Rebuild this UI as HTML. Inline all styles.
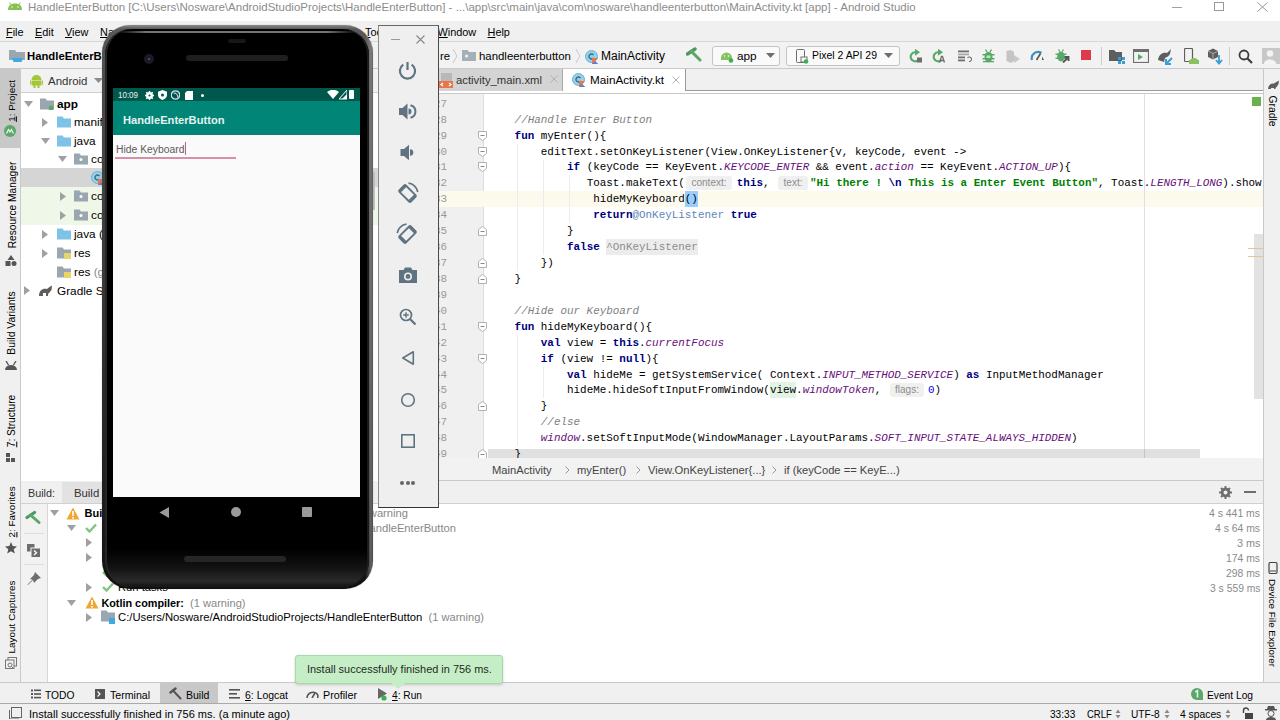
<!DOCTYPE html><html><head><meta charset="utf-8"><style>
html,body{margin:0;padding:0;width:1280px;height:720px;overflow:hidden;background:#f2f2f2;position:relative;font-family:"Liberation Sans",sans-serif;}
div{box-sizing:border-box;}
.k{color:#000080;font-weight:bold}.c{color:#808080;font-style:italic}.s{color:#008000;font-weight:bold}.p{color:#660e7a;font-style:italic}.lb{color:#5b86b8}
</style></head><body>
<div style="position:absolute;left:0px;top:0px;width:1280px;height:21px;background:#fff"></div>
<svg style="position:absolute;left:7px;top:2px" width="16" height="9" viewBox="0 0 16 9"><path d="M1 8 C1 3.5 4 1.5 8 1.5 C12 1.5 15 3.5 15 8 Z" fill="#86bf55"/><line x1="2.5" y1="0.5" x2="4" y2="2.5" stroke="#86bf55" stroke-width="1"/><line x1="13.5" y1="0.5" x2="12" y2="2.5" stroke="#86bf55" stroke-width="1"/><circle cx="5" cy="5" r="0.9" fill="#c8f0a0"/><circle cx="11" cy="5" r="0.9" fill="#c8f0a0"/></svg>
<div style="position:absolute;left:28px;top:-0.60px;height:16px;line-height:16px;font-family:'Liberation Sans', sans-serif;font-size:11.50px;color:#8c8c8c;font-weight:400;white-space:pre;">HandleEnterButton [C:\Users\Nosware\AndroidStudioProjects\HandleEnterButton] - ...\app\src\main\java\com\nosware\handleenterbutton\MainActivity.kt [app] - Android Studio</div>
<div style="position:absolute;left:1172px;top:7px;width:10px;height:1px;background:#a0a0a0"></div>
<div style="position:absolute;left:1214px;top:2px;width:10px;height:9px;border:1px solid #999"></div>
<svg style="position:absolute;left:1257px;top:2px" width="11" height="10"><path d="M0.5 0.5 L10.5 9.5 M10.5 0.5 L0.5 9.5" stroke="#999" stroke-width="1"/></svg>
<div style="position:absolute;left:0px;top:21px;width:1280px;height:20px;background:#f0f0f0"></div>
<div style="position:absolute;left:0px;top:41px;width:1280px;height:1px;background:#d6d6d6"></div>
<div style="position:absolute;left:6px;top:23.50px;height:16px;line-height:16px;font-family:'Liberation Sans', sans-serif;font-size:10.9px;color:#000;font-weight:400;white-space:pre;text-decoration-color:#888;"><u>F</u>ile</div>
<div style="position:absolute;left:35px;top:23.50px;height:16px;line-height:16px;font-family:'Liberation Sans', sans-serif;font-size:10.9px;color:#000;font-weight:400;white-space:pre;text-decoration-color:#888;"><u>E</u>dit</div>
<div style="position:absolute;left:65px;top:23.50px;height:16px;line-height:16px;font-family:'Liberation Sans', sans-serif;font-size:10.9px;color:#000;font-weight:400;white-space:pre;text-decoration-color:#888;"><u>V</u>iew</div>
<div style="position:absolute;left:100px;top:23.50px;height:16px;line-height:16px;font-family:'Liberation Sans', sans-serif;font-size:10.9px;color:#000;font-weight:400;white-space:pre;text-decoration-color:#888;"><u>N</u>avigate</div>
<div style="position:absolute;left:365px;top:23.50px;height:16px;line-height:16px;font-family:'Liberation Sans', sans-serif;font-size:10.9px;color:#000;font-weight:400;white-space:pre;text-decoration-color:#888;"><u>T</u>ools</div>
<div style="position:absolute;left:437.5px;top:23.50px;height:16px;line-height:16px;font-family:'Liberation Sans', sans-serif;font-size:10.9px;color:#000;font-weight:400;white-space:pre;text-decoration-color:#888;"><u>W</u>indow</div>
<div style="position:absolute;left:487.5px;top:23.50px;height:16px;line-height:16px;font-family:'Liberation Sans', sans-serif;font-size:10.9px;color:#000;font-weight:400;white-space:pre;text-decoration-color:#888;"><u>H</u>elp</div>
<div style="position:absolute;left:0px;top:42px;width:1280px;height:26px;background:#f2f2f2"></div>
<div style="position:absolute;left:0px;top:68px;width:1280px;height:1px;background:#c9c9c9"></div>
<svg style="position:absolute;left:9px;top:49px" width="16" height="14"><path d="M0 1 h6 l1.5 2 h8.5 v8 h-16z" fill="#9aa7b0"/><path d="M3 9 h11 l-1.5 4 h-8z" fill="#40a9e0"/></svg>
<div style="position:absolute;left:27px;top:47.60px;height:16px;line-height:16px;font-family:'Liberation Sans', sans-serif;font-size:11.3px;color:#000;font-weight:bold;white-space:pre;">HandleEnterBu</div>
<div style="position:absolute;left:440px;top:48.00px;height:16px;line-height:16px;font-family:'Liberation Sans', sans-serif;font-size:11.4px;color:#000;font-weight:400;white-space:pre;">re</div>
<svg style="position:absolute;left:452px;top:48px" width="6" height="16"><path d="M1 1 L5 8 L1 15" stroke="#c8c8c8" fill="none"/></svg>
<svg style="position:absolute;left:462px;top:50px" width="14" height="11"><path d="M0 0 h5.5 l1.5 2 h7 v9 h-14z" fill="#a4afb6"/><circle cx="4.5" cy="6" r="1.6" fill="#eef"/></svg>
<div style="position:absolute;left:479px;top:48.00px;height:16px;line-height:16px;font-family:'Liberation Sans', sans-serif;font-size:11.41px;color:#000;font-weight:400;white-space:pre;">handleenterbutton</div>
<svg style="position:absolute;left:575px;top:48px" width="6" height="16"><path d="M1 1 L5 8 L1 15" stroke="#c8c8c8" fill="none"/></svg>
<svg style="position:absolute;left:585px;top:50px" width="14" height="14"><circle cx="6.5" cy="6.5" r="6" fill="#9ccfe6"/><circle cx="6.5" cy="6.5" r="6" fill="none" stroke="#5fb5d8" stroke-width="1"/><path d="M8.5 5 A2.5 2.5 0 1 0 8.5 8" stroke="#2d6f90" stroke-width="1.4" fill="none"/><path d="M7 14 L7 8 L13 8 L10 11 L13 14z" fill="#e8784a"/><path d="M7 14 L10 11 L13 14z" fill="#5a7bd8"/></svg>
<div style="position:absolute;left:601px;top:48.00px;height:16px;line-height:16px;font-family:'Liberation Sans', sans-serif;font-size:12px;color:#000;font-weight:400;white-space:pre;">MainActivity</div>
<svg style="position:absolute;left:686px;top:47px" width="16" height="16"><path d="M1.5 7 L9 2" stroke="#4e9a5e" stroke-width="3.4" stroke-linecap="round"/><path d="M5.5 4.5 L14 13" stroke="#59a869" stroke-width="3" stroke-linecap="round"/></svg>
<div style="position:absolute;left:712px;top:46px;width:68px;height:20px;background:#fafafa;border:1px solid #c4c4c4;border-radius:3px"></div>
<svg style="position:absolute;left:720px;top:50px" width="14" height="13"><path d="M1 8 A5.5 5.5 0 0 1 12 8 Z" fill="#8ac060"/><circle cx="4.5" cy="6" r="0.7" fill="#fff"/><circle cx="8.5" cy="6" r="0.7" fill="#fff"/><rect x="1" y="8" width="11" height="2" fill="#8ac060"/><circle cx="11" cy="10.5" r="2.3" fill="#3cb04a"/></svg>
<div style="position:absolute;left:737px;top:48.00px;height:16px;line-height:16px;font-family:'Liberation Sans', sans-serif;font-size:11.8px;color:#000;font-weight:400;white-space:pre;">app</div>
<svg style="position:absolute;left:766px;top:53px" width="9" height="6"><path d="M0 0 h9 l-4.5 5z" fill="#6e6e6e"/></svg>
<div style="position:absolute;left:786px;top:46px;width:114px;height:20px;background:#fafafa;border:1px solid #c4c4c4;border-radius:3px"></div>
<svg style="position:absolute;left:796px;top:49px" width="13" height="15"><rect x="0.5" y="0.5" width="8" height="13" rx="1" fill="none" stroke="#6e6e6e"/><rect x="5" y="8" width="6" height="5" fill="#fafafa" stroke="#6e6e6e"/><circle cx="10" cy="12.5" r="2.3" fill="#3cb04a"/></svg>
<div style="position:absolute;left:812px;top:48.00px;height:16px;line-height:16px;font-family:'Liberation Sans', sans-serif;font-size:10.44px;color:#000;font-weight:400;white-space:pre;">Pixel 2 API 29</div>
<svg style="position:absolute;left:884px;top:53px" width="9" height="6"><path d="M0 0 h9 l-4.5 5z" fill="#6e6e6e"/></svg>
<svg style="position:absolute;left:909px;top:49px" width="14" height="14" viewBox="0 0 14 14"><path d="M6.5 3.2 A4.6 4.6 0 1 0 9.6 11" stroke="#59a869" stroke-width="2.1" fill="none"/><path d="M6 -0.3 L11 3.2 L6 6.7z" fill="#59a869"/><rect x="8" y="8.5" width="5" height="5" fill="#6e6e6e"/></svg>
<svg style="position:absolute;left:932px;top:49px" width="14" height="14" viewBox="0 0 14 14"><path d="M6.5 3.2 A4.6 4.6 0 1 0 9.6 11" stroke="#59a869" stroke-width="2.1" fill="none"/><path d="M6 -0.3 L11 3.2 L6 6.7z" fill="#59a869"/><path d="M7.5 13.5 L9.5 7.5 H10.5 L12.5 13.5 M8.3 11.5 H11.7" stroke="#6e6e6e" stroke-width="1.3" fill="none"/></svg>
<svg style="position:absolute;left:958px;top:50px" width="14" height="12" viewBox="0 0 14 12"><rect x="0" y="0.5" width="11" height="1.8" fill="#6e6e6e"/><rect x="0" y="3.5" width="11" height="1.8" fill="#aaa"/><rect x="0" y="6.5" width="7" height="1.8" fill="#6e6e6e"/><rect x="0" y="9.5" width="7" height="1.8" fill="#6e6e6e"/><path d="M9.5 8 A2.2 2.2 0 1 1 11 11.5" stroke="#6e6e6e" stroke-width="1.1" fill="none"/></svg>
<svg style="position:absolute;left:982px;top:49px" width="13" height="14" viewBox="0 0 13 14"><ellipse cx="6.5" cy="8" rx="4" ry="5.3" fill="#59a869"/><rect x="0.5" y="5" width="12" height="1.5" fill="#59a869"/><rect x="0.5" y="9" width="12" height="1.5" fill="#59a869"/><rect x="1" y="12" width="11" height="1.3" fill="#59a869"/><path d="M3.5 0.5 L5 3 M9.5 0.5 L8 3" stroke="#59a869" stroke-width="1.4"/><rect x="4.5" y="6.5" width="4" height="2.5" fill="#b8e8b8"/></svg>
<svg style="position:absolute;left:1006px;top:50px" width="15" height="13" viewBox="0 0 15 13"><path d="M0.5 1 L5 0 L8 2 V11 L5 13 L0.5 11z" fill="#c4c4c4"/><path d="M8 5 L14 9 L8 13z" fill="#c8c8c8"/></svg>
<svg style="position:absolute;left:1030px;top:50px" width="15" height="11" viewBox="0 0 15 11"><path d="M2 10 A6.3 6.3 0 0 1 11.5 3" stroke="#3d8fc0" stroke-width="2.2" fill="none"/><path d="M6.5 10 L10.5 3.5" stroke="#555" stroke-width="1.6"/><path d="M12 6.5 L14 10 H12z" fill="#555"/></svg>
<svg style="position:absolute;left:1055px;top:49px" width="15" height="14" viewBox="0 0 15 14"><ellipse cx="6" cy="7.5" rx="3.8" ry="5" fill="#59a869"/><rect x="0.5" y="4.5" width="11" height="1.4" fill="#59a869"/><rect x="0.5" y="8.5" width="11" height="1.4" fill="#59a869"/><path d="M3.5 0.5 L4.8 2.5 M8.5 0.5 L7.2 2.5" stroke="#59a869" stroke-width="1.3"/><path d="M8 13.5 L13.5 8 M9.5 8 H13.5 V12" stroke="#555" stroke-width="1.9" fill="none"/></svg>
<svg style="position:absolute;left:1081px;top:50px" width="10" height="10" viewBox="0 0 10 10"><rect x="0" y="0" width="10" height="10" fill="#db3b4b"/></svg>
<div style="position:absolute;left:1101px;top:47px;width:1px;height:18px;background:#cdcdcd"></div>
<svg style="position:absolute;left:1109px;top:49px" width="16" height="16" viewBox="0 0 16 16"><path d="M0 1 h5 l2 2 h6 v9 h-13z" fill="#5e5e5e"/><rect x="9" y="8" width="3" height="3" fill="#389fd6"/><rect x="13" y="8" width="3" height="3" fill="#389fd6"/><rect x="9" y="12" width="3" height="3" fill="#389fd6"/><rect x="13" y="12" width="3" height="3" fill="#389fd6"/></svg>
<svg style="position:absolute;left:1133px;top:49px" width="16" height="14" viewBox="0 0 16 14"><rect x="0.5" y="0.5" width="15" height="13" fill="none" stroke="#6e6e6e" stroke-width="1.2"/><rect x="0" y="0" width="16" height="3" fill="#6e6e6e"/><path d="M5 5 L10 8 L5 11z" fill="#59a869"/></svg>
<svg style="position:absolute;left:1157px;top:48px" width="17" height="17" viewBox="0 0 17 17"><path d="M1 12 C2 6 6 4 10 5 C12 3 13 2 14 1 L13 6 C12 8 10 9 8 10 L7 14z" fill="#5e5e5e"/><path d="M9 16 L15 10 M9 11 v5 h5" stroke="#389fd6" stroke-width="2" fill="none"/></svg>
<svg style="position:absolute;left:1184px;top:48px" width="15" height="16" viewBox="0 0 15 16"><rect x="0.5" y="0.5" width="8" height="13" rx="1" fill="none" stroke="#5e5e5e" stroke-width="1.2"/><path d="M5 15 A5 5 0 0 1 15 15z" fill="#8ac060"/><rect x="5" y="12" width="10" height="4" fill="#8ac060"/></svg>
<svg style="position:absolute;left:1207px;top:48px" width="16" height="17" viewBox="0 0 16 17"><path d="M1 3 L6 0.5 L11 3 L11 9 L6 11.5 L1 9z" fill="#5e5e5e"/><path d="M1 3 L6 5.5 L11 3 M6 5.5 V11.5" stroke="#c0c0c0" stroke-width=".8" fill="none"/><path d="M12 7 V15 M9 12 L12 15.5 L15 12" stroke="#389fd6" stroke-width="1.8" fill="none"/></svg>
<div style="position:absolute;left:1229px;top:47px;width:1px;height:18px;background:#cdcdcd"></div>
<svg style="position:absolute;left:1238px;top:49px" width="15" height="15" viewBox="0 0 15 15"><circle cx="6" cy="6" r="4.5" stroke="#3c3c3c" stroke-width="1.8" fill="none"/><path d="M9.5 9.5 L14 14" stroke="#3c3c3c" stroke-width="2.2"/></svg>
<svg style="position:absolute;left:1262px;top:48px" width="18" height="16" viewBox="0 0 18 16"><rect x="0" y="0" width="18" height="16" fill="#c8c8c8"/><circle cx="8" cy="5.5" r="3.2" fill="#f4f4f4"/><path d="M2 16 C2 10 14 10 14 16z" fill="#f4f4f4"/></svg>
<div style="position:absolute;left:0px;top:69px;width:21px;height:614px;background:#f0f0f0"></div>
<div style="position:absolute;left:20px;top:69px;width:1px;height:614px;background:#c9c9c9"></div>
<div style="position:absolute;left:0px;top:69px;width:20px;height:79px;background:#c8c8c8"></div>
<div style="position:absolute;left:-8.9px;top:92.8px;width:41.7px;height:16px;line-height:16px;text-align:center;transform:rotate(-90deg);font-family:'Liberation Sans', sans-serif;font-size:9.9px;color:#000;white-space:pre"><u>1</u>: Project</div>
<svg style="position:absolute;left:4px;top:125px" width="12" height="12" viewBox="0 0 12 12"><circle cx="6" cy="6" r="6" fill="#59a869"/><path d="M2.5 8.5 L4.5 4.5 L6 7 L7.5 4.5 L9.5 8.5" stroke="#e8f4e8" stroke-width="1.3" fill="none"/></svg>
<div style="position:absolute;left:-31.5px;top:197.2px;width:87.0px;height:16px;line-height:16px;text-align:center;transform:rotate(-90deg);font-family:'Liberation Sans', sans-serif;font-size:10.2px;color:#000;white-space:pre">Resource Manager</div>
<svg style="position:absolute;left:5px;top:255px" width="12" height="11" viewBox="0 0 12 11"><path d="M6 0 L9.5 5 H2.5z" fill="#555"/><rect x="0.5" y="6" width="5" height="5" fill="#555"/><circle cx="9" cy="8.5" r="2.5" fill="#555"/></svg>
<div style="position:absolute;left:-19.7px;top:314.5px;width:63.39999999999998px;height:16px;line-height:16px;text-align:center;transform:rotate(-90deg);font-family:'Liberation Sans', sans-serif;font-size:10.4px;color:#000;white-space:pre">Build Variants</div>
<svg style="position:absolute;left:5px;top:361px" width="12" height="9" viewBox="0 0 12 9"><path d="M0 9 A6 5 0 0 1 12 9z" fill="#555"/><path d="M1 0 L3.5 4 M11 0 L8.5 4" stroke="#555" stroke-width="1.4"/></svg>
<div style="position:absolute;left:-14.2px;top:413.2px;width:52.5px;height:16px;line-height:16px;text-align:center;transform:rotate(-90deg);font-family:'Liberation Sans', sans-serif;font-size:10.16px;color:#000;white-space:pre"><u>7</u>: Structure</div>
<svg style="position:absolute;left:6px;top:453px" width="10" height="9" viewBox="0 0 10 9"><rect x="0" y="0" width="4" height="4" fill="#555"/><rect x="0" y="5" width="4" height="4" fill="#555"/><rect x="5" y="5" width="4" height="4" fill="#555"/></svg>
<div style="position:absolute;left:-13.4px;top:504.1px;width:50.80000000000001px;height:16px;line-height:16px;text-align:center;transform:rotate(-90deg);font-family:'Liberation Sans', sans-serif;font-size:9.76px;color:#000;white-space:pre"><u>2</u>: Favorites</div>
<svg style="position:absolute;left:5px;top:542px" width="12" height="12" viewBox="0 0 12 12"><path d="M6 0 L7.7 4.1 L12 4.4 L8.7 7.3 L9.8 11.6 L6 9.2 L2.2 11.6 L3.3 7.3 L0 4.4 L4.3 4.1z" fill="#555"/></svg>
<div style="position:absolute;left:-24.6px;top:609.4px;width:73.20000000000005px;height:16px;line-height:16px;text-align:center;transform:rotate(-90deg);font-family:'Liberation Sans', sans-serif;font-size:9.95px;color:#000;white-space:pre">Layout Captures</div>
<svg style="position:absolute;left:5px;top:657px" width="12" height="12" viewBox="0 0 12 12"><rect x="3" y="0.5" width="8.5" height="8.5" fill="none" stroke="#777"/><rect x="0.5" y="3" width="8.5" height="8.5" fill="#f0f0f0" stroke="#777"/><circle cx="5" cy="8" r="2" fill="none" stroke="#777"/><path d="M6.5 9.5 L8.5 11.5" stroke="#777"/></svg>
<div style="position:absolute;left:21px;top:69px;width:418px;height:24px;background:#f2f2f2"></div>
<div style="position:absolute;left:21px;top:92px;width:418px;height:1px;background:#d0d0d0"></div>
<svg style="position:absolute;left:30px;top:73px" width="13" height="16" viewBox="0 0 13 16"><path d="M1.5 7 A5 5 0 0 1 11.5 7z" fill="#a4c639"/><rect x="1.5" y="7.5" width="10" height="5" fill="#a4c639"/><rect x="0" y="7.5" width="1" height="4" fill="#a4c639"/><rect x="12" y="7.5" width="1" height="4" fill="#a4c639"/><rect x="3.5" y="12" width="2" height="3" fill="#a4c639"/><rect x="7.5" y="12" width="2" height="3" fill="#a4c639"/></svg>
<div style="position:absolute;left:48px;top:72.50px;height:16px;line-height:16px;font-family:'Liberation Sans', sans-serif;font-size:11.46px;color:#333;font-weight:400;white-space:pre;">Android</div>
<svg style="position:absolute;left:94px;top:78px" width="9" height="6" viewBox="0 0 9 6"><path d="M0 0 h9 l-4.5 5z" fill="#8c8c8c"/></svg>
<div style="position:absolute;left:93px;top:93px;width:346px;height:590px;background:#fff"></div>
<div style="position:absolute;left:21px;top:93px;width:418px;height:590px;background:#fff"></div>
<div style="position:absolute;left:21px;top:168px;width:418px;height:19px;background:#d5d5d5"></div>
<div style="position:absolute;left:21px;top:187px;width:418px;height:38px;background:#eff7e9"></div>
<svg style="position:absolute;left:24px;top:100.5px" width="9" height="7" viewBox="0 0 9 7"><path d="M0 0 h9 l-4.5 6z" fill="#a0a0a0"/></svg>
<svg style="position:absolute;left:40px;top:97.5px" width="14" height="12" viewBox="0 0 14 12"><path d="M0 0.5 h5.5 l1.5 2 h7 v9 h-14z" fill="#9aa7b0"/><circle cx="11" cy="10" r="2.5" fill="#59a869"/></svg>
<div style="position:absolute;left:57px;top:95.50px;height:16px;line-height:16px;font-family:'Liberation Sans', sans-serif;font-size:11.8px;color:#000;font-weight:bold;white-space:pre;">app</div>
<svg style="position:absolute;left:42px;top:117.5px" width="7" height="9" viewBox="0 0 7 9"><path d="M0 0 v9 l6 -4.5z" fill="#a0a0a0"/></svg>
<svg style="position:absolute;left:57px;top:116px" width="14" height="12" viewBox="0 0 14 12"><path d="M0 0.5 h5.5 l1.5 2 h7 v9 h-14z" fill="#7ec3e6"/></svg>
<div style="position:absolute;left:74px;top:114.00px;height:16px;line-height:16px;font-family:'Liberation Sans', sans-serif;font-size:11.8px;color:#000;font-weight:400;white-space:pre;">manifests</div>
<svg style="position:absolute;left:41px;top:137.5px" width="9" height="7" viewBox="0 0 9 7"><path d="M0 0 h9 l-4.5 6z" fill="#a0a0a0"/></svg>
<svg style="position:absolute;left:57px;top:134.5px" width="14" height="12" viewBox="0 0 14 12"><path d="M0 0.5 h5.5 l1.5 2 h7 v9 h-14z" fill="#7ec3e6"/></svg>
<div style="position:absolute;left:74px;top:132.50px;height:16px;line-height:16px;font-family:'Liberation Sans', sans-serif;font-size:11.8px;color:#000;font-weight:400;white-space:pre;">java</div>
<svg style="position:absolute;left:58px;top:156px" width="9" height="7" viewBox="0 0 9 7"><path d="M0 0 h9 l-4.5 6z" fill="#a0a0a0"/></svg>
<svg style="position:absolute;left:74px;top:153px" width="14" height="12" viewBox="0 0 14 12"><path d="M0 0.5 h5.5 l1.5 2 h7 v9 h-14z" fill="#9aa7b0"/><circle cx="7" cy="6.5" r="1.5" fill="#fff"/></svg>
<div style="position:absolute;left:91px;top:151.00px;height:16px;line-height:16px;font-family:'Liberation Sans', sans-serif;font-size:11.8px;color:#000;font-weight:400;white-space:pre;">com.nosware.handleenterbutton</div>
<svg style="position:absolute;left:91px;top:170.5px" width="14" height="14"><circle cx="6.5" cy="6.5" r="6" fill="#9ccfe6"/><circle cx="6.5" cy="6.5" r="6" fill="none" stroke="#5fb5d8" stroke-width="1"/><path d="M8.5 5 A2.5 2.5 0 1 0 8.5 8" stroke="#2d6f90" stroke-width="1.4" fill="none"/><path d="M7 14 L7 8 L13 8 L10 11 L13 14z" fill="#e8784a"/><path d="M7 14 L10 11 L13 14z" fill="#5a7bd8"/></svg>
<svg style="position:absolute;left:60px;top:191.5px" width="7" height="9" viewBox="0 0 7 9"><path d="M0 0 v9 l6 -4.5z" fill="#a0a0a0"/></svg>
<svg style="position:absolute;left:74px;top:190px" width="14" height="12" viewBox="0 0 14 12"><path d="M0 0.5 h5.5 l1.5 2 h7 v9 h-14z" fill="#9aa7b0"/><circle cx="7" cy="6.5" r="1.5" fill="#fff"/></svg>
<div style="position:absolute;left:91px;top:188.00px;height:16px;line-height:16px;font-family:'Liberation Sans', sans-serif;font-size:11.8px;color:#000;font-weight:400;white-space:pre;">com.nosware.handleenterbutton (androidTest)</div>
<svg style="position:absolute;left:60px;top:210.5px" width="7" height="9" viewBox="0 0 7 9"><path d="M0 0 v9 l6 -4.5z" fill="#a0a0a0"/></svg>
<svg style="position:absolute;left:74px;top:209px" width="14" height="12" viewBox="0 0 14 12"><path d="M0 0.5 h5.5 l1.5 2 h7 v9 h-14z" fill="#9aa7b0"/><circle cx="7" cy="6.5" r="1.5" fill="#fff"/></svg>
<div style="position:absolute;left:91px;top:207.00px;height:16px;line-height:16px;font-family:'Liberation Sans', sans-serif;font-size:11.8px;color:#000;font-weight:400;white-space:pre;">com.nosware.handleenterbutton (test)</div>
<svg style="position:absolute;left:42px;top:229.5px" width="7" height="9" viewBox="0 0 7 9"><path d="M0 0 v9 l6 -4.5z" fill="#a0a0a0"/></svg>
<svg style="position:absolute;left:57px;top:228px" width="14" height="12" viewBox="0 0 14 12"><path d="M0 0.5 h5.5 l1.5 2 h7 v9 h-14z" fill="#7ec3e6"/></svg>
<div style="position:absolute;left:74px;top:226.00px;height:16px;line-height:16px;font-family:'Liberation Sans', sans-serif;font-size:11.8px;color:#000;font-weight:400;white-space:pre;">java (generated)</div>
<svg style="position:absolute;left:42px;top:248.5px" width="7" height="9" viewBox="0 0 7 9"><path d="M0 0 v9 l6 -4.5z" fill="#a0a0a0"/></svg>
<svg style="position:absolute;left:57px;top:247px" width="14" height="12" viewBox="0 0 14 12"><path d="M0 0.5 h5.5 l1.5 2 h7 v9 h-14z" fill="#9aa7b0"/><rect x="7" y="6" width="7" height="6" fill="#e8d46a"/></svg>
<div style="position:absolute;left:74px;top:245.00px;height:16px;line-height:16px;font-family:'Liberation Sans', sans-serif;font-size:11.8px;color:#000;font-weight:400;white-space:pre;">res</div>
<svg style="position:absolute;left:57px;top:265.5px" width="14" height="12" viewBox="0 0 14 12"><path d="M0 0.5 h5.5 l1.5 2 h7 v9 h-14z" fill="#9aa7b0"/><rect x="7" y="6" width="7" height="6" fill="#e8d46a"/></svg>
<div style="position:absolute;left:74px;top:263.50px;height:16px;line-height:16px;font-family:'Liberation Sans', sans-serif;font-size:11.8px;color:#000;font-weight:400;white-space:pre;">res <span style="color:#888">(generated)</span></div>
<svg style="position:absolute;left:24px;top:286.0px" width="7" height="9" viewBox="0 0 7 9"><path d="M0 0 v9 l6 -4.5z" fill="#a0a0a0"/></svg>
<svg style="position:absolute;left:38px;top:284.5px" width="16" height="12" viewBox="0 0 16 12"><path d="M1 11 C1 5 5 3 9 4 C11 2 13 1 14 0.5 L13.5 5 C12 7 11 8 10 9 L10 11 H8 V8 H5 V11z" fill="#5e5e5e"/></svg>
<div style="position:absolute;left:57px;top:282.50px;height:16px;line-height:16px;font-family:'Liberation Sans', sans-serif;font-size:11.8px;color:#000;font-weight:400;white-space:pre;">Gradle Scripts</div>
<div style="position:absolute;left:371px;top:172px;width:4px;height:38px;background:#c0c0c0"></div>
<div style="position:absolute;left:439px;top:69px;width:841px;height:25px;background:#fff"></div>
<div style="position:absolute;left:439px;top:69px;width:824px;height:22px;background:#f0f0f0"></div>
<div style="position:absolute;left:685px;top:69px;width:1px;height:22px;background:#9a9a9a"></div>
<div style="position:absolute;left:439px;top:90px;width:824px;height:1px;background:#9a9a9a"></div>
<div style="position:absolute;left:439px;top:69px;width:124px;height:22px;background:#d4d4d4"></div>
<div style="position:absolute;left:562px;top:69px;width:1px;height:22px;background:#a8a8a8"></div>
<div style="position:absolute;left:563px;top:69px;width:122px;height:25px;background:#fff"></div>
<div style="position:absolute;left:439px;top:93px;width:824px;height:1px;background:#c9c9c9"></div>
<svg style="position:absolute;left:439px;top:73px" width="15" height="16" viewBox="0 0 15 16"><rect x="2" y="0" width="11" height="9" fill="#b8b8b8"/><rect x="0" y="8" width="14" height="7" fill="#e8754a"/><path d="M4 10 L2 11.5 L4 13 M10 10 L12 11.5 L10 13" stroke="#fff" stroke-width="1.2" fill="none"/></svg>
<div style="position:absolute;left:456px;top:72.00px;height:16px;line-height:16px;font-family:'Liberation Sans', sans-serif;font-size:11.3px;color:#333;font-weight:400;white-space:pre;">activity_main.xml</div>
<svg style="position:absolute;left:550px;top:75px" width="8" height="8" viewBox="0 0 8 8"><path d="M0.5 0.5 L7.5 7.5 M7.5 0.5 L0.5 7.5" stroke="#b0b0b0"/></svg>
<svg style="position:absolute;left:572px;top:73px" width="14" height="14"><circle cx="6.5" cy="6.5" r="6" fill="#9ccfe6"/><circle cx="6.5" cy="6.5" r="6" fill="none" stroke="#5fb5d8" stroke-width="1"/><path d="M8.5 5 A2.5 2.5 0 1 0 8.5 8" stroke="#2d6f90" stroke-width="1.4" fill="none"/><path d="M7 14 L7 8 L13 8 L10 11 L13 14z" fill="#e8784a"/><path d="M7 14 L10 11 L13 14z" fill="#5a7bd8"/></svg>
<div style="position:absolute;left:590px;top:72.00px;height:16px;line-height:16px;font-family:'Liberation Sans', sans-serif;font-size:11.72px;color:#000;font-weight:400;white-space:pre;">MainActivity.kt</div>
<svg style="position:absolute;left:672px;top:76px" width="8" height="8" viewBox="0 0 8 8"><path d="M0.5 0.5 L7.5 7.5 M7.5 0.5 L0.5 7.5" stroke="#b0b0b0"/></svg>
<div style="position:absolute;left:439px;top:94px;width:824px;height:364px;background:#fff"></div>
<div style="position:absolute;left:439px;top:94px;width:44px;height:364px;background:#f0f0f0"></div>
<div style="position:absolute;left:483px;top:94px;width:1px;height:364px;background:#dcdcdc"></div>
<div style="position:absolute;left:439px;top:191.32999999999998px;width:824px;height:16px;background:#fcfaed"></div>
<div style="position:absolute;left:1144px;top:94px;width:1px;height:364px;background:#e0e0e0"></div>
<div style="position:absolute;left:400px;top:95.75px;width:47px;height:16px;line-height:16px;text-align:right;font-family:'Liberation Mono', monospace;font-size:10.9px;color:#999">27</div>
<div style="position:absolute;left:400px;top:111.68px;width:47px;height:16px;line-height:16px;text-align:right;font-family:'Liberation Mono', monospace;font-size:10.9px;color:#999">28</div>
<div style="position:absolute;left:400px;top:127.61px;width:47px;height:16px;line-height:16px;text-align:right;font-family:'Liberation Mono', monospace;font-size:10.9px;color:#999">29</div>
<div style="position:absolute;left:400px;top:143.54px;width:47px;height:16px;line-height:16px;text-align:right;font-family:'Liberation Mono', monospace;font-size:10.9px;color:#999">30</div>
<div style="position:absolute;left:400px;top:159.47px;width:47px;height:16px;line-height:16px;text-align:right;font-family:'Liberation Mono', monospace;font-size:10.9px;color:#999">31</div>
<div style="position:absolute;left:400px;top:175.40px;width:47px;height:16px;line-height:16px;text-align:right;font-family:'Liberation Mono', monospace;font-size:10.9px;color:#999">32</div>
<div style="position:absolute;left:400px;top:191.33px;width:47px;height:16px;line-height:16px;text-align:right;font-family:'Liberation Mono', monospace;font-size:10.9px;color:#999">33</div>
<div style="position:absolute;left:400px;top:207.26px;width:47px;height:16px;line-height:16px;text-align:right;font-family:'Liberation Mono', monospace;font-size:10.9px;color:#999">34</div>
<div style="position:absolute;left:400px;top:223.19px;width:47px;height:16px;line-height:16px;text-align:right;font-family:'Liberation Mono', monospace;font-size:10.9px;color:#999">35</div>
<div style="position:absolute;left:400px;top:239.12px;width:47px;height:16px;line-height:16px;text-align:right;font-family:'Liberation Mono', monospace;font-size:10.9px;color:#999">36</div>
<div style="position:absolute;left:400px;top:255.05px;width:47px;height:16px;line-height:16px;text-align:right;font-family:'Liberation Mono', monospace;font-size:10.9px;color:#999">37</div>
<div style="position:absolute;left:400px;top:270.98px;width:47px;height:16px;line-height:16px;text-align:right;font-family:'Liberation Mono', monospace;font-size:10.9px;color:#999">38</div>
<div style="position:absolute;left:400px;top:286.91px;width:47px;height:16px;line-height:16px;text-align:right;font-family:'Liberation Mono', monospace;font-size:10.9px;color:#999">39</div>
<div style="position:absolute;left:400px;top:302.84px;width:47px;height:16px;line-height:16px;text-align:right;font-family:'Liberation Mono', monospace;font-size:10.9px;color:#999">40</div>
<div style="position:absolute;left:400px;top:318.77px;width:47px;height:16px;line-height:16px;text-align:right;font-family:'Liberation Mono', monospace;font-size:10.9px;color:#999">41</div>
<div style="position:absolute;left:400px;top:334.70px;width:47px;height:16px;line-height:16px;text-align:right;font-family:'Liberation Mono', monospace;font-size:10.9px;color:#999">42</div>
<div style="position:absolute;left:400px;top:350.63px;width:47px;height:16px;line-height:16px;text-align:right;font-family:'Liberation Mono', monospace;font-size:10.9px;color:#999">43</div>
<div style="position:absolute;left:400px;top:366.56px;width:47px;height:16px;line-height:16px;text-align:right;font-family:'Liberation Mono', monospace;font-size:10.9px;color:#999">44</div>
<div style="position:absolute;left:400px;top:382.49px;width:47px;height:16px;line-height:16px;text-align:right;font-family:'Liberation Mono', monospace;font-size:10.9px;color:#999">45</div>
<div style="position:absolute;left:400px;top:398.42px;width:47px;height:16px;line-height:16px;text-align:right;font-family:'Liberation Mono', monospace;font-size:10.9px;color:#999">46</div>
<div style="position:absolute;left:400px;top:414.35px;width:47px;height:16px;line-height:16px;text-align:right;font-family:'Liberation Mono', monospace;font-size:10.9px;color:#999">47</div>
<div style="position:absolute;left:400px;top:430.28px;width:47px;height:16px;line-height:16px;text-align:right;font-family:'Liberation Mono', monospace;font-size:10.9px;color:#999">48</div>
<div style="position:absolute;left:400px;top:446.21px;width:47px;height:16px;line-height:16px;text-align:right;font-family:'Liberation Mono', monospace;font-size:10.9px;color:#999">49</div>
<svg style="position:absolute;left:478px;top:130.61px" width="9" height="10" viewBox="0 0 9 10"><path d="M0.5 0.5 h8 v6 l-4 3 l-4 -3z" fill="#fff" stroke="#b0b0b0"/><path d="M2.5 4.5 h4" stroke="#888"/></svg>
<svg style="position:absolute;left:478px;top:146.54px" width="9" height="10" viewBox="0 0 9 10"><path d="M0.5 0.5 h8 v6 l-4 3 l-4 -3z" fill="#fff" stroke="#b0b0b0"/><path d="M2.5 4.5 h4" stroke="#888"/></svg>
<svg style="position:absolute;left:478px;top:162.47px" width="9" height="10" viewBox="0 0 9 10"><path d="M0.5 0.5 h8 v6 l-4 3 l-4 -3z" fill="#fff" stroke="#b0b0b0"/><path d="M2.5 4.5 h4" stroke="#888"/></svg>
<svg style="position:absolute;left:478px;top:226.19px" width="9" height="10" viewBox="0 0 9 10"><path d="M0.5 9.5 h8 v-6 l-4 -3 l-4 3z" fill="#fff" stroke="#b0b0b0"/><path d="M2.5 5.5 h4" stroke="#888"/></svg>
<svg style="position:absolute;left:478px;top:258.05px" width="9" height="10" viewBox="0 0 9 10"><path d="M0.5 9.5 h8 v-6 l-4 -3 l-4 3z" fill="#fff" stroke="#b0b0b0"/><path d="M2.5 5.5 h4" stroke="#888"/></svg>
<svg style="position:absolute;left:478px;top:273.98px" width="9" height="10" viewBox="0 0 9 10"><path d="M0.5 9.5 h8 v-6 l-4 -3 l-4 3z" fill="#fff" stroke="#b0b0b0"/><path d="M2.5 5.5 h4" stroke="#888"/></svg>
<svg style="position:absolute;left:478px;top:321.77px" width="9" height="10" viewBox="0 0 9 10"><path d="M0.5 0.5 h8 v6 l-4 3 l-4 -3z" fill="#fff" stroke="#b0b0b0"/><path d="M2.5 4.5 h4" stroke="#888"/></svg>
<svg style="position:absolute;left:478px;top:353.63px" width="9" height="10" viewBox="0 0 9 10"><path d="M0.5 0.5 h8 v6 l-4 3 l-4 -3z" fill="#fff" stroke="#b0b0b0"/><path d="M2.5 4.5 h4" stroke="#888"/></svg>
<svg style="position:absolute;left:478px;top:401.42px" width="9" height="10" viewBox="0 0 9 10"><path d="M0.5 9.5 h8 v-6 l-4 -3 l-4 3z" fill="#fff" stroke="#b0b0b0"/><path d="M2.5 5.5 h4" stroke="#888"/></svg>
<svg style="position:absolute;left:478px;top:449.21px" width="9" height="10" viewBox="0 0 9 10"><path d="M0.5 9.5 h8 v-6 l-4 -3 l-4 3z" fill="#fff" stroke="#b0b0b0"/><path d="M2.5 5.5 h4" stroke="#888"/></svg>
<div style="position:absolute;left:516.6px;top:143.61px;width:1px;height:127.37px;background:#ececec"></div>
<div style="position:absolute;left:542.8px;top:159.54px;width:1px;height:95.51000000000002px;background:#ececec"></div>
<div style="position:absolute;left:569.0px;top:175.47px;width:1px;height:47.72px;background:#ececec"></div>
<div style="position:absolute;left:516.6px;top:334.77px;width:1px;height:111.44px;background:#ececec"></div>
<div style="position:absolute;left:542.8px;top:366.63px;width:1px;height:31.79000000000002px;background:#ececec"></div>
<div style="position:absolute;left:514.60px;top:111.68px;height:16px;line-height:16px;font-family:'Liberation Mono', monospace;font-size:10.92px;color:#000;white-space:pre"><span class="c">//Handle Enter Button</span></div>
<div style="position:absolute;left:514.60px;top:127.61px;height:16px;line-height:16px;font-family:'Liberation Mono', monospace;font-size:10.92px;color:#000;white-space:pre"><span class="k">fun</span> myEnter(){</div>
<div style="position:absolute;left:540.80px;top:143.54px;height:16px;line-height:16px;font-family:'Liberation Mono', monospace;font-size:10.92px;color:#000;white-space:pre">editText.setOnKeyListener(View.OnKeyListener{v, keyCode, event -&gt;</div>
<div style="position:absolute;left:567.00px;top:159.47px;height:16px;line-height:16px;font-family:'Liberation Mono', monospace;font-size:10.92px;color:#000;white-space:pre"><span class="k">if</span> (keyCode == KeyEvent.<span class="p">KEYCODE_ENTER</span> &amp;&amp; event.<span class="p">action</span> == KeyEvent.<span class="p">ACTION_UP</span>){</div>
<div style="position:absolute;left:586.65px;top:175.40px;height:16px;line-height:16px;font-family:'Liberation Mono', monospace;font-size:10.92px;color:#000;white-space:pre">Toast.makeText(</div>
<div style="position:absolute;left:686px;top:175.90px;width:46px;height:14px;line-height:14px;background:#f0f0f0;border-radius:3px;font-family:'Liberation Sans', sans-serif;font-size:10px;color:#8c8c8c;text-align:center;white-space:pre">context:</div>
<div style="position:absolute;left:736.80px;top:175.40px;height:16px;line-height:16px;font-family:'Liberation Mono', monospace;font-size:10.92px;color:#000;white-space:pre"><span class="k">this</span>,</div>
<div style="position:absolute;left:778px;top:175.90px;width:30px;height:14px;line-height:14px;background:#f0f0f0;border-radius:3px;font-family:'Liberation Sans', sans-serif;font-size:10px;color:#8c8c8c;text-align:center;white-space:pre">text:</div>
<div style="position:absolute;left:810.00px;top:175.40px;height:16px;line-height:16px;font-family:'Liberation Mono', monospace;font-size:10.92px;color:#000;white-space:pre"><span class="s">"Hi there ! <span style="color:#000080">\n</span> This is a Enter Event Button"</span>, Toast.<span class="p">LENGTH_LONG</span>).show</div>
<div style="position:absolute;left:593.20px;top:191.33px;height:16px;line-height:16px;font-family:'Liberation Mono', monospace;font-size:10.92px;color:#000;white-space:pre">hideMyKeyboard<span style="display:inline-block;height:16px;background:#99ccff">()</span></div>
<div style="position:absolute;left:593.20px;top:207.26px;height:16px;line-height:16px;font-family:'Liberation Mono', monospace;font-size:10.92px;color:#000;white-space:pre"><span class="k">return</span><span class="lb">@OnKeyListener</span> <span class="k">true</span></div>
<div style="position:absolute;left:567.00px;top:223.19px;height:16px;line-height:16px;font-family:'Liberation Mono', monospace;font-size:10.92px;color:#000;white-space:pre">}</div>
<div style="position:absolute;left:567.00px;top:239.12px;height:16px;line-height:16px;font-family:'Liberation Mono', monospace;font-size:10.92px;color:#000;white-space:pre"><span class="k">false</span> <span style="display:inline-block;height:16px;background:#ececec;color:#8c8c8c">^OnKeyListener</span></div>
<div style="position:absolute;left:540.80px;top:255.05px;height:16px;line-height:16px;font-family:'Liberation Mono', monospace;font-size:10.92px;color:#000;white-space:pre">})</div>
<div style="position:absolute;left:514.60px;top:270.98px;height:16px;line-height:16px;font-family:'Liberation Mono', monospace;font-size:10.92px;color:#000;white-space:pre">}</div>
<div style="position:absolute;left:514.60px;top:302.84px;height:16px;line-height:16px;font-family:'Liberation Mono', monospace;font-size:10.92px;color:#000;white-space:pre"><span class="c">//Hide our Keyboard</span></div>
<div style="position:absolute;left:514.60px;top:318.77px;height:16px;line-height:16px;font-family:'Liberation Mono', monospace;font-size:10.92px;color:#000;white-space:pre"><span class="k">fun</span> hideMyKeyboard(){</div>
<div style="position:absolute;left:540.80px;top:334.70px;height:16px;line-height:16px;font-family:'Liberation Mono', monospace;font-size:10.92px;color:#000;white-space:pre"><span class="k">val</span> view = <span class="k">this</span>.<span class="p">currentFocus</span></div>
<div style="position:absolute;left:540.80px;top:350.63px;height:16px;line-height:16px;font-family:'Liberation Mono', monospace;font-size:10.92px;color:#000;white-space:pre"><span class="k">if</span> (view != <span class="k">null</span>){</div>
<div style="position:absolute;left:567.00px;top:366.56px;height:16px;line-height:16px;font-family:'Liberation Mono', monospace;font-size:10.92px;color:#000;white-space:pre"><span class="k">val</span> hideMe = getSystemService( Context.<span class="p">INPUT_METHOD_SERVICE</span>) <span class="k">as</span> InputMethodManager</div>
<div style="position:absolute;left:567.00px;top:382.49px;height:16px;line-height:16px;font-family:'Liberation Mono', monospace;font-size:10.92px;color:#000;white-space:pre">hideMe.hideSoftInputFromWindow(<span style="display:inline-block;height:16px;background:#e4f4e4">view</span>.<span class="p">windowToken</span>,</div>
<div style="position:absolute;left:890px;top:382.99px;width:34px;height:14px;line-height:14px;background:#f0f0f0;border-radius:3px;font-family:'Liberation Sans', sans-serif;font-size:10px;color:#8c8c8c;text-align:center;white-space:pre">flags:</div>
<div style="position:absolute;left:928.00px;top:382.49px;height:16px;line-height:16px;font-family:'Liberation Mono', monospace;font-size:10.92px;color:#000;white-space:pre"><span style="color:#0000ff">0</span>)</div>
<div style="position:absolute;left:540.80px;top:398.42px;height:16px;line-height:16px;font-family:'Liberation Mono', monospace;font-size:10.92px;color:#000;white-space:pre">}</div>
<div style="position:absolute;left:540.80px;top:414.35px;height:16px;line-height:16px;font-family:'Liberation Mono', monospace;font-size:10.92px;color:#000;white-space:pre"><span class="c">//else</span></div>
<div style="position:absolute;left:540.80px;top:430.28px;height:16px;line-height:16px;font-family:'Liberation Mono', monospace;font-size:10.92px;color:#000;white-space:pre"><span class="p">window</span>.setSoftInputMode(WindowManager.LayoutParams.<span class="p">SOFT_INPUT_STATE_ALWAYS_HIDDEN</span>)</div>
<div style="position:absolute;left:514.60px;top:446.21px;height:16px;line-height:16px;font-family:'Liberation Mono', monospace;font-size:10.92px;color:#000;white-space:pre">}</div>
<div style="position:absolute;left:488px;top:449px;width:712px;height:10px;background:rgba(0,0,0,.12)"></div>
<div style="position:absolute;left:1254px;top:234px;width:9px;height:165px;background:#e2e2e2"></div>
<div style="position:absolute;left:1248px;top:248px;width:15px;height:1px;background:#d8cc98"></div>
<div style="position:absolute;left:1248px;top:256px;width:15px;height:1px;background:#d8cc98"></div>
<div style="position:absolute;left:1252px;top:97px;width:9px;height:9px;background:#6ab04c"></div>
<div style="position:absolute;left:439px;top:458px;width:824px;height:23px;background:#f2f2f2"></div>
<div style="position:absolute;left:439px;top:480px;width:824px;height:1px;background:#c9c9c9"></div>
<div style="position:absolute;left:492px;top:462.00px;height:16px;line-height:16px;font-family:'Liberation Sans', sans-serif;font-size:11.2px;color:#444;font-weight:400;white-space:pre;">MainActivity</div>
<div style="position:absolute;left:577px;top:462.00px;height:16px;line-height:16px;font-family:'Liberation Sans', sans-serif;font-size:11.2px;color:#444;font-weight:400;white-space:pre;">myEnter()</div>
<div style="position:absolute;left:648px;top:462.00px;height:16px;line-height:16px;font-family:'Liberation Sans', sans-serif;font-size:11.2px;color:#444;font-weight:400;white-space:pre;">View.OnKeyListener{...}</div>
<div style="position:absolute;left:784px;top:462.00px;height:16px;line-height:16px;font-family:'Liberation Sans', sans-serif;font-size:11.2px;color:#444;font-weight:400;white-space:pre;">if (keyCode == KeyE...)</div>
<svg style="position:absolute;left:565px;top:466px" width="5" height="8" viewBox="0 0 5 8"><path d="M0.5 0.5 L4 4 L0.5 7.5" stroke="#999" fill="none"/></svg>
<svg style="position:absolute;left:636px;top:466px" width="5" height="8" viewBox="0 0 5 8"><path d="M0.5 0.5 L4 4 L0.5 7.5" stroke="#999" fill="none"/></svg>
<svg style="position:absolute;left:772px;top:466px" width="5" height="8" viewBox="0 0 5 8"><path d="M0.5 0.5 L4 4 L0.5 7.5" stroke="#999" fill="none"/></svg>
<div style="position:absolute;left:21px;top:481px;width:1242px;height:22px;background:#f0f0f0"></div>
<div style="position:absolute;left:21px;top:503px;width:1242px;height:1px;background:#d0d0d0"></div>
<div style="position:absolute;left:27.8px;top:484.60px;height:16px;line-height:16px;font-family:'Liberation Sans', sans-serif;font-size:11.6px;color:#333;font-weight:400;white-space:pre;transform:scaleX(0.9305);transform-origin:0 0;">Build:</div>
<div style="position:absolute;left:62px;top:482px;width:60px;height:21px;background:#e2e2e2"></div>
<div style="position:absolute;left:73.9px;top:484.60px;height:16px;line-height:16px;font-family:'Liberation Sans', sans-serif;font-size:11.4px;color:#333;font-weight:400;white-space:pre;">Build Output</div>
<svg style="position:absolute;left:1219px;top:486px" width="13" height="13" viewBox="0 0 13 13"><circle cx="6.5" cy="6.5" r="3.6" fill="none" stroke="#6e6e6e" stroke-width="2.4"/><path d="M6.5 0 V13 M0 6.5 H13 M2 2 L11 11 M11 2 L2 11" stroke="#6e6e6e" stroke-width="2"/><circle cx="6.5" cy="6.5" r="2" fill="#f0f0f0"/></svg>
<div style="position:absolute;left:1244px;top:491px;width:12px;height:2px;background:#6e6e6e"></div>
<div style="position:absolute;left:21px;top:504px;width:1242px;height:178px;background:#fff"></div>
<div style="position:absolute;left:21px;top:504px;width:27px;height:178px;background:#f2f2f2"></div>
<div style="position:absolute;left:47px;top:504px;width:1px;height:178px;background:#d6d6d6"></div>
<svg style="position:absolute;left:25px;top:510px" width="16" height="15" viewBox="0 0 16 15"><path d="M2 7.5 L9.5 2.5" stroke="#4e9a5e" stroke-width="3.2" stroke-linecap="round"/><path d="M5.5 5 L14 12.5" stroke="#59a869" stroke-width="3" stroke-linecap="round"/></svg>
<div style="position:absolute;left:24px;top:533px;width:20px;height:1px;background:#dcdcdc"></div>
<svg style="position:absolute;left:27px;top:544px" width="13" height="13" viewBox="0 0 13 13"><rect x="0" y="0" width="7.5" height="7.5" fill="#6e6e6e"/><rect x="3.5" y="3.5" width="9.5" height="9.5" fill="#f2f2f2"/><rect x="4.5" y="4.5" width="8.5" height="8.5" fill="#6e6e6e"/><path d="M7 6.5 L9.5 8.8 L7 11" stroke="#fff" stroke-width="1.3" fill="none"/></svg>
<div style="position:absolute;left:24px;top:564px;width:20px;height:1px;background:#dcdcdc"></div>
<svg style="position:absolute;left:27px;top:572px" width="14" height="14" viewBox="0 0 14 14"><path d="M8 0 L14 6 L11 7 L7 11 L6 8 L1 13 L0.5 12.5 L5.5 7.5 L3 7 L7 3z" fill="#6e6e6e"/></svg>
<svg style="position:absolute;left:50px;top:510px" width="9" height="7" viewBox="0 0 9 7"><path d="M0 0 h9 l-4.5 6z" fill="#a0a0a0"/></svg>
<svg style="position:absolute;left:66px;top:506.5px" width="14" height="13" viewBox="0 0 14 13"><path d="M7 0.5 L13.5 12.5 H0.5z" fill="#f0a732"/><rect x="6.2" y="4" width="1.6" height="5" fill="#fff"/><rect x="6.2" y="10" width="1.6" height="1.6" fill="#fff"/></svg>
<div style="position:absolute;left:84.6px;top:505.00px;height:16px;line-height:16px;font-family:'Liberation Sans', sans-serif;font-size:11px;color:#000;font-weight:bold;white-space:pre;">Build:</div>
<div style="position:absolute;left:108px;top:505px;width:300px;height:16px;line-height:16px;text-align:right;font-family:'Liberation Sans', sans-serif;font-size:11.2px;color:#888;white-space:pre">completed successfully with 1 warning</div>
<svg style="position:absolute;left:67px;top:525px" width="9" height="7" viewBox="0 0 9 7"><path d="M0 0 h9 l-4.5 6z" fill="#a0a0a0"/></svg>
<svg style="position:absolute;left:85px;top:523px" width="12" height="10" viewBox="0 0 12 10"><path d="M1 5 L4.5 8.5 L11 1.5" stroke="#82c283" stroke-width="2.4" fill="none"/></svg>
<div style="position:absolute;left:102px;top:520.00px;height:16px;line-height:16px;font-family:'Liberation Sans', sans-serif;font-size:11.2px;color:#000;font-weight:400;white-space:pre;">Run build</div>
<div style="position:absolute;left:150px;top:520px;width:306px;height:16px;line-height:16px;text-align:right;font-family:'Liberation Sans', sans-serif;font-size:11.2px;color:#888;white-space:pre">C:\Users\Nosware\AndroidStudioProjects\HandleEnterButton</div>
<svg style="position:absolute;left:86px;top:538.0px" width="7" height="9" viewBox="0 0 7 9"><path d="M0 0 v9 l6 -4.5z" fill="#a0a0a0"/></svg>
<svg style="position:absolute;left:102px;top:537.5px" width="12" height="10" viewBox="0 0 12 10"><path d="M1 5 L4.5 8.5 L11 1.5" stroke="#82c283" stroke-width="2.4" fill="none"/></svg>
<svg style="position:absolute;left:86px;top:552.5px" width="7" height="9" viewBox="0 0 7 9"><path d="M0 0 v9 l6 -4.5z" fill="#a0a0a0"/></svg>
<svg style="position:absolute;left:102px;top:552px" width="12" height="10" viewBox="0 0 12 10"><path d="M1 5 L4.5 8.5 L11 1.5" stroke="#82c283" stroke-width="2.4" fill="none"/></svg>
<svg style="position:absolute;left:102px;top:567px" width="12" height="10" viewBox="0 0 12 10"><path d="M1 5 L4.5 8.5 L11 1.5" stroke="#82c283" stroke-width="2.4" fill="none"/></svg>
<svg style="position:absolute;left:86px;top:582.5px" width="7" height="9" viewBox="0 0 7 9"><path d="M0 0 v9 l6 -4.5z" fill="#a0a0a0"/></svg>
<svg style="position:absolute;left:102px;top:582px" width="12" height="10" viewBox="0 0 12 10"><path d="M1 5 L4.5 8.5 L11 1.5" stroke="#82c283" stroke-width="2.4" fill="none"/></svg>
<div style="position:absolute;left:118px;top:579.00px;height:16px;line-height:16px;font-family:'Liberation Sans', sans-serif;font-size:11.2px;color:#000;font-weight:400;white-space:pre;">Run tasks</div>
<svg style="position:absolute;left:67px;top:599.5px" width="9" height="7" viewBox="0 0 9 7"><path d="M0 0 h9 l-4.5 6z" fill="#a0a0a0"/></svg>
<svg style="position:absolute;left:85px;top:596.0px" width="14" height="13" viewBox="0 0 14 13"><path d="M7 0.5 L13.5 12.5 H0.5z" fill="#f0a732"/><rect x="6.2" y="4" width="1.6" height="5" fill="#fff"/><rect x="6.2" y="10" width="1.6" height="1.6" fill="#fff"/></svg>
<div style="position:absolute;left:101.4px;top:594.50px;height:16px;line-height:16px;font-family:'Liberation Sans', sans-serif;font-size:10.85px;color:#000;font-weight:bold;white-space:pre;">Kotlin compiler:</div>
<div style="position:absolute;left:190px;top:594.50px;height:16px;line-height:16px;font-family:'Liberation Sans', sans-serif;font-size:11.10px;color:#888;font-weight:400;white-space:pre;">(1 warning)</div>
<svg style="position:absolute;left:86px;top:612.5px" width="7" height="9" viewBox="0 0 7 9"><path d="M0 0 v9 l6 -4.5z" fill="#a0a0a0"/></svg>
<svg style="position:absolute;left:101px;top:610px" width="15" height="14" viewBox="0 0 15 14"><path d="M0 0.5 h5.5 l1.5 2 h7 v9 h-14z" fill="#9aa7b0"/><rect x="8" y="8" width="6" height="6" fill="#40a9e0"/></svg>
<div style="position:absolute;left:118px;top:609.00px;height:16px;line-height:16px;font-family:'Liberation Sans', sans-serif;font-size:11.27px;color:#000;font-weight:400;white-space:pre;">C:/Users/Nosware/AndroidStudioProjects/HandleEnterButton</div>
<div style="position:absolute;left:428.6px;top:609.00px;height:16px;line-height:16px;font-family:'Liberation Sans', sans-serif;font-size:11.08px;color:#888;font-weight:400;white-space:pre;">(1 warning)</div>
<div style="position:absolute;left:1209px;top:504.80px;height:16px;line-height:16px;font-family:'Liberation Sans', sans-serif;font-size:11px;color:#8a8a8a;font-weight:400;white-space:pre;transform:scaleX(0.9479);transform-origin:0 0;">4 s 441 ms</div>
<div style="position:absolute;left:1215px;top:519.50px;height:16px;line-height:16px;font-family:'Liberation Sans', sans-serif;font-size:11px;color:#8a8a8a;font-weight:400;white-space:pre;transform:scaleX(0.9437);transform-origin:0 0;">4 s 64 ms</div>
<div style="position:absolute;left:1236.5px;top:534.50px;height:16px;line-height:16px;font-family:'Liberation Sans', sans-serif;font-size:11px;color:#8a8a8a;font-weight:400;white-space:pre;transform:scaleX(0.9858);transform-origin:0 0;">3 ms</div>
<div style="position:absolute;left:1226px;top:549.50px;height:16px;line-height:16px;font-family:'Liberation Sans', sans-serif;font-size:11px;color:#8a8a8a;font-weight:400;white-space:pre;transform:scaleX(0.9425);transform-origin:0 0;">174 ms</div>
<div style="position:absolute;left:1226px;top:564.50px;height:16px;line-height:16px;font-family:'Liberation Sans', sans-serif;font-size:11px;color:#8a8a8a;font-weight:400;white-space:pre;transform:scaleX(0.9425);transform-origin:0 0;">298 ms</div>
<div style="position:absolute;left:1209.5px;top:579.50px;height:16px;line-height:16px;font-family:'Liberation Sans', sans-serif;font-size:11px;color:#8a8a8a;font-weight:400;white-space:pre;transform:scaleX(0.9386);transform-origin:0 0;">3 s 559 ms</div>
<div style="position:absolute;left:1263px;top:69px;width:17px;height:614px;background:#f0f0f0"></div>
<div style="position:absolute;left:1263px;top:69px;width:1px;height:614px;background:#c9c9c9"></div>
<svg style="position:absolute;left:1267px;top:80px" width="12" height="9" viewBox="0 0 12 9"><path d="M1 10 C1 5 4 3 7 3.5 C9 2 11 1 12 0.5 L11.5 4 C10.5 6 9.5 7 8.5 8 V10 H7 V8 H4 V10z" fill="#5e5e5e"/></svg>
<div style="position:absolute;left:1256.5px;top:103.2px;width:30.900000000000006px;height:16px;line-height:16px;text-align:center;transform:rotate(90deg);font-family:'Liberation Sans', sans-serif;font-size:10.3px;color:#000;white-space:pre">Gradle</div>
<svg style="position:absolute;left:1268px;top:562px" width="10" height="12" viewBox="0 0 10 12"><rect x="1" y="0.5" width="8" height="11" rx="1.5" fill="none" stroke="#444" stroke-width="1.2"/><rect x="2" y="8.5" width="6" height="1" fill="#444"/></svg>
<div style="position:absolute;left:1227.8px;top:614.5px;width:88.40000000000009px;height:16px;line-height:16px;text-align:center;transform:rotate(90deg);font-family:'Liberation Sans', sans-serif;font-size:9.84px;color:#000;white-space:pre">Device File Explorer</div>
<div style="position:absolute;left:0px;top:682px;width:1280px;height:21px;background:#f0f0f0"></div>
<div style="position:absolute;left:0px;top:682px;width:1280px;height:1px;background:#c9c9c9"></div>
<div style="position:absolute;left:0px;top:703px;width:1280px;height:1px;background:#a9a9a9"></div>
<div style="position:absolute;left:160px;top:683px;width:58px;height:20px;background:#c8c8c8"></div>
<svg style="position:absolute;left:31px;top:689px" width="10" height="10" viewBox="0 0 10 10"><rect x="0" y="0.5" width="2" height="2" fill="#555"/><rect x="3" y="0.5" width="7" height="1.6" fill="#555"/><rect x="0" y="4" width="2" height="2" fill="#555"/><rect x="3" y="4.2" width="7" height="1.6" fill="#555"/><rect x="0" y="7.5" width="2" height="2" fill="#555"/><rect x="3" y="7.8" width="7" height="1.6" fill="#555"/></svg>
<div style="position:absolute;left:45.3px;top:686.70px;height:16px;line-height:16px;font-family:'Liberation Sans', sans-serif;font-size:10.8px;color:#000;font-weight:400;white-space:pre;transform:scaleX(0.9483);transform-origin:0 0;">TODO</div>
<svg style="position:absolute;left:95px;top:689px" width="10" height="10" viewBox="0 0 10 10"><rect x="0" y="0" width="10" height="10" fill="#555"/><path d="M2.5 2.5 L5 5 L2.5 7.5" stroke="#fff" stroke-width="1.2" fill="none"/></svg>
<div style="position:absolute;left:110.2px;top:686.70px;height:16px;line-height:16px;font-family:'Liberation Sans', sans-serif;font-size:10.8px;color:#000;font-weight:400;white-space:pre;transform:scaleX(0.9825);transform-origin:0 0;">Terminal</div>
<svg style="position:absolute;left:169px;top:687px" width="13" height="14" viewBox="0 0 13 14"><path d="M1.5 5.5 L6.5 1.5" stroke="#555" stroke-width="2.4" stroke-linecap="round"/><path d="M4 3.5 L11.5 11.5" stroke="#555" stroke-width="2" stroke-linecap="round"/></svg>
<div style="position:absolute;left:186px;top:686.70px;height:16px;line-height:16px;font-family:'Liberation Sans', sans-serif;font-size:10.8px;color:#000;font-weight:400;white-space:pre;transform:scaleX(0.9743);transform-origin:0 0;">Build</div>
<svg style="position:absolute;left:229px;top:689px" width="11" height="10" viewBox="0 0 11 10"><rect x="0" y="0" width="11" height="1.6" fill="#555"/><rect x="0" y="4" width="8" height="1.6" fill="#555"/><rect x="0" y="8" width="11" height="1.6" fill="#555"/></svg>
<div style="position:absolute;left:245px;top:686.70px;height:16px;line-height:16px;font-family:'Liberation Sans', sans-serif;font-size:10.8px;color:#000;font-weight:400;white-space:pre;transform:scaleX(0.9677);transform-origin:0 0;"><u>6</u>: Logcat</div>
<svg style="position:absolute;left:306px;top:689px" width="13" height="9" viewBox="0 0 13 9"><path d="M1 9 A6 6 0 0 1 12 6" stroke="#555" stroke-width="1.6" fill="none"/><path d="M6 9 L9 4" stroke="#555" stroke-width="1.6"/><rect x="11" y="6" width="1.6" height="3" fill="#555"/></svg>
<div style="position:absolute;left:323px;top:686.70px;height:16px;line-height:16px;font-family:'Liberation Sans', sans-serif;font-size:10.8px;color:#000;font-weight:400;white-space:pre;transform:scaleX(0.9939);transform-origin:0 0;">Profiler</div>
<svg style="position:absolute;left:377px;top:688px" width="13" height="13" viewBox="0 0 13 13"><path d="M1 0 L10 5.5 L1 11z" fill="#666"/><circle cx="7" cy="10" r="2.6" fill="#3cb04a"/></svg>
<div style="position:absolute;left:392px;top:686.70px;height:16px;line-height:16px;font-family:'Liberation Sans', sans-serif;font-size:10.8px;color:#000;font-weight:400;white-space:pre;transform:scaleX(0.9428);transform-origin:0 0;"><u>4</u>: Run</div>
<svg style="position:absolute;left:1191px;top:688px" width="12" height="12" viewBox="0 0 12 12"><path d="M6 0 A6 6 0 1 0 6 12 H12 V6 A6 6 0 0 0 6 0z" fill="#59a869"/><path d="M4.3 4 L6.5 2.6 V9.5" stroke="#e8f6e8" stroke-width="1.6" fill="none"/></svg>
<div style="position:absolute;left:1207px;top:686.70px;height:16px;line-height:16px;font-family:'Liberation Sans', sans-serif;font-size:10.8px;color:#000;font-weight:400;white-space:pre;transform:scaleX(0.9458);transform-origin:0 0;">Event Log</div>
<div style="position:absolute;left:0px;top:704px;width:1280px;height:16px;background:#f0f0f0"></div>
<svg style="position:absolute;left:9px;top:707px" width="13" height="12" viewBox="0 0 13 12"><rect x="2.5" y="0.5" width="10" height="10" fill="none" stroke="#666"/><path d="M0.5 3 V12 H10" stroke="#666" fill="none"/></svg>
<div style="position:absolute;left:29px;top:705.80px;height:16px;line-height:16px;font-family:'Liberation Sans', sans-serif;font-size:11.05px;color:#000;font-weight:400;white-space:pre;">Install successfully finished in 756 ms. (a minute ago)</div>
<div style="position:absolute;left:1050.3px;top:705.80px;height:16px;line-height:16px;font-family:'Liberation Sans', sans-serif;font-size:10.6px;color:#000;font-weight:400;white-space:pre;transform:scaleX(0.9538);transform-origin:0 0;">33:33</div>
<div style="position:absolute;left:1086.5px;top:705.80px;height:16px;line-height:16px;font-family:'Liberation Sans', sans-serif;font-size:10.6px;color:#000;font-weight:400;white-space:pre;transform:scaleX(0.8941);transform-origin:0 0;">CRLF</div>
<div style="position:absolute;left:1131.3px;top:705.80px;height:16px;line-height:16px;font-family:'Liberation Sans', sans-serif;font-size:10.6px;color:#000;font-weight:400;white-space:pre;transform:scaleX(0.9557);transform-origin:0 0;">UTF-8</div>
<div style="position:absolute;left:1179.7px;top:705.80px;height:16px;line-height:16px;font-family:'Liberation Sans', sans-serif;font-size:10.6px;color:#000;font-weight:400;white-space:pre;transform:scaleX(0.9734);transform-origin:0 0;">4 spaces</div>
<svg style="position:absolute;left:1115.4px;top:709px" width="6" height="10" viewBox="0 0 6 10"><path d="M0.5 4 L3 0.5 L5.5 4z M0.5 6 L3 9.5 L5.5 6z" fill="#888"/></svg>
<svg style="position:absolute;left:1164px;top:709px" width="6" height="10" viewBox="0 0 6 10"><path d="M0.5 4 L3 0.5 L5.5 4z M0.5 6 L3 9.5 L5.5 6z" fill="#888"/></svg>
<svg style="position:absolute;left:1224.5px;top:709px" width="6" height="10" viewBox="0 0 6 10"><path d="M0.5 4 L3 0.5 L5.5 4z M0.5 6 L3 9.5 L5.5 6z" fill="#888"/></svg>
<svg style="position:absolute;left:1242px;top:707px" width="11" height="12" viewBox="0 0 11 12"><path d="M1.5 6 V3.5 A2.5 2.5 0 0 1 6.5 3.5" stroke="#444" stroke-width="1.4" fill="none"/><rect x="3" y="6" width="8" height="6" fill="#444"/></svg>
<svg style="position:absolute;left:1265px;top:705px" width="12" height="15" viewBox="0 0 12 15"><path d="M2 4 h8 l-1 -3 h-6z" fill="#555"/><rect x="0" y="4" width="12" height="1.5" fill="#555"/><circle cx="6" cy="8.5" r="3" fill="none" stroke="#555"/><path d="M1 15 C1 11 11 11 11 15z" fill="#555"/></svg>
<div style="position:absolute;left:102px;top:25px;width:271px;height:564px;border-radius:28px;background:linear-gradient(90deg,rgba(0,0,0,0) 263px,rgba(150,150,150,.6) 269px,rgba(120,120,120,.5) 271px),linear-gradient(180deg,#8a8a8a 0px,#5a5a5a 4px,#4a4a4a 60px,#3a3a3a 250px,#242424 420px,#141414 540px,#101010 564px);box-shadow:0 0 1px rgba(0,0,0,.4)"></div>
<div style="position:absolute;left:104.5px;top:29px;width:264.5px;height:558px;border-radius:26px;background:linear-gradient(180deg,#000 0px,#000 520px,#141414 540px,#2a2a2a 552px,#181818 556px);box-shadow:inset 2px 0 0 #262626, inset -2px 0 0 #1a1a1a"></div>
<div style="position:absolute;left:118px;top:30.8px;width:238px;height:2.2px;background:linear-gradient(90deg,rgba(110,110,110,0),#747474 12%,#747474 88%,rgba(110,110,110,0))"></div>
<div style="position:absolute;left:144px;top:54px;width:10px;height:10px;border-radius:50%;background:#1a1a2a"></div>
<div style="position:absolute;left:148px;top:58px;width:2px;height:2px;border-radius:50%;background:#556"></div>
<div style="position:absolute;left:228px;top:38.5px;width:18px;height:4.5px;border-radius:2px;background:#171717"></div>
<div style="position:absolute;left:186px;top:55px;width:102px;height:6px;border-radius:3px;background:#1e1e1e"></div>
<div style="position:absolute;left:184px;top:556px;width:102px;height:6px;border-radius:3px;background:#262626"></div>
<div style="position:absolute;left:113px;top:88px;width:247px;height:409px;background:#fafafa"></div>
<div style="position:absolute;left:113px;top:88px;width:247px;height:13px;background:#00574b"></div>
<div style="position:absolute;left:113px;top:101px;width:247px;height:34px;background:#008577"></div>
<div style="position:absolute;left:118px;top:87.00px;height:16px;line-height:16px;font-family:'Liberation Sans', sans-serif;font-size:9px;color:#e8f0ee;font-weight:400;white-space:pre;transform:scaleX(0.8880);transform-origin:0 0;">10:09</div>
<svg style="position:absolute;left:145px;top:91px" width="9" height="9" viewBox="0 0 9 9"><circle cx="4.5" cy="4.5" r="2.6" fill="none" stroke="#fff" stroke-width="1.8"/><path d="M4.5 0 V9 M0 4.5 H9 M1.3 1.3 L7.7 7.7 M7.7 1.3 L1.3 7.7" stroke="#fff" stroke-width="1.4"/><circle cx="4.5" cy="4.5" r="1" fill="#00574b"/></svg>
<svg style="position:absolute;left:158px;top:90px" width="9" height="10" viewBox="0 0 9 10"><path d="M4.5 0 L9 1.8 V5 C9 7.5 6.5 9.5 4.5 10 C2.5 9.5 0 7.5 0 5 V1.8z" fill="#fff"/><circle cx="4.5" cy="5" r="1.5" fill="#00574b"/></svg>
<svg style="position:absolute;left:171px;top:90px" width="9" height="10" viewBox="0 0 9 10"><circle cx="4.5" cy="5" r="4.2" fill="none" stroke="#dde" stroke-width="1.2"/><path d="M2.5 3 C5 3 7 5 7 7.5" stroke="#dde" stroke-width="1.2" fill="none"/></svg>
<svg style="position:absolute;left:185px;top:91px" width="8" height="9" viewBox="0 0 8 9"><path d="M2 0 H8 V9 H0 V2z" fill="#fff"/></svg>
<div style="position:absolute;left:201px;top:94px;width:3px;height:3px;background:#fff;border-radius:50%"></div>
<svg style="position:absolute;left:327px;top:90px" width="12" height="10" viewBox="0 0 12 10"><path d="M0 2 C4 -1 8 -1 12 2 L6 9z" fill="#fff"/></svg>
<svg style="position:absolute;left:339px;top:90px" width="8" height="10" viewBox="0 0 8 10"><path d="M8 0 V9 H0z" fill="none" stroke="#fff" stroke-width="1"/><path d="M8 4 V9 H3z" fill="#fff"/></svg>
<div style="position:absolute;left:349px;top:90px;width:5px;height:9px;background:#fff;border-radius:1px"></div>
<div style="position:absolute;left:123px;top:111.60px;height:16px;line-height:16px;font-family:'Liberation Sans', sans-serif;font-size:11.5px;color:#e4f2f0;font-weight:bold;white-space:pre;transform:scaleX(0.9687);transform-origin:0 0;">HandleEnterButton</div>
<div style="position:absolute;left:115.5px;top:142.10px;height:16px;line-height:16px;font-family:'Liberation Sans', sans-serif;font-size:10px;color:#5a5a5a;font-weight:400;white-space:pre;transform:scaleX(1.0355);transform-origin:0 0;">Hide Keyboard</div>
<div style="position:absolute;left:185px;top:142px;width:1px;height:13px;background:#c06080"></div>
<div style="position:absolute;left:115px;top:157px;width:121px;height:2px;background:#d690aa"></div>
<svg style="position:absolute;left:159px;top:507px" width="11" height="11" viewBox="0 0 11 11"><path d="M10 0 V11 L0.5 5.5z" fill="#9a9a9a"/></svg>
<div style="position:absolute;left:231px;top:507px;width:10px;height:10px;border-radius:50%;background:#9a9a9a"></div>
<div style="position:absolute;left:302px;top:507px;width:10px;height:10px;background:#9a9a9a;border-radius:1px"></div>
<div style="position:absolute;left:378px;top:25px;width:61px;height:483px;background:#efefef;border:1px solid #8a8a8a;border-top-color:#666;border-right-color:#4a4a4a;border-bottom:1px solid #333"></div>
<div style="position:absolute;left:391px;top:39px;width:9px;height:1.2px;background:#999"></div>
<svg style="position:absolute;left:416px;top:35px" width="9" height="9" viewBox="0 0 9 9"><path d="M0.5 0.5 L8.5 8.5 M8.5 0.5 L0.5 8.5" stroke="#888" stroke-width="1.1"/></svg>
<svg style="position:absolute;left:398px;top:61px" width="19" height="19" viewBox="0 0 19 19"><path d="M5.3 3.6 A7.6 7.6 0 1 0 13.7 3.6" stroke="#5f7480" stroke-width="2.2" fill="none"/><path d="M9.5 1 V9" stroke="#5f7480" stroke-width="2.2"/></svg>
<svg style="position:absolute;left:398px;top:102px" width="19" height="19" viewBox="0 0 19 19"><path d="M1 6 H4.5 L9.5 1.5 V17.5 L4.5 13 H1z" fill="#5f7480"/><path d="M10.5 6.5 A3 3 0 0 1 10.5 12.5z" fill="#5f7480"/><path d="M12.5 3.2 A6.5 6.5 0 0 1 12.5 15.8" stroke="#5f7480" stroke-width="2" fill="none"/></svg>
<svg style="position:absolute;left:400px;top:144px" width="15" height="17" viewBox="0 0 15 17"><path d="M0.5 5 H4 L9 0.8 V16.2 L4 12 H0.5z" fill="#5f7480"/><path d="M10 5.2 A3.3 3.3 0 0 1 10 11.8z" fill="#5f7480"/></svg>
<svg style="position:absolute;left:396px;top:182px" width="23" height="23" viewBox="0 0 23 23"><g transform="rotate(-45 11.5 11.5)"><rect x="7" y="3.5" width="9" height="16" rx="1.2" fill="none" stroke="#5f7480" stroke-width="1.9"/><rect x="7" y="3.5" width="9" height="2.6" fill="#5f7480"/><rect x="7" y="16.9" width="9" height="2.6" fill="#5f7480"/></g><path d="M12.5 1.2 A10.5 10.5 0 0 1 21.8 10" stroke="#5f7480" stroke-width="1.7" fill="none"/></svg>
<svg style="position:absolute;left:396px;top:223px" width="23" height="23" viewBox="0 0 23 23"><g transform="rotate(45 11.5 11.5)"><rect x="7" y="3.5" width="9" height="16" rx="1.2" fill="none" stroke="#5f7480" stroke-width="1.9"/><rect x="7" y="3.5" width="9" height="2.6" fill="#5f7480"/><rect x="7" y="16.9" width="9" height="2.6" fill="#5f7480"/></g><path d="M10.5 1.2 A10.5 10.5 0 0 0 1.2 10" stroke="#5f7480" stroke-width="1.7" fill="none"/></svg>
<svg style="position:absolute;left:399px;top:267px" width="18" height="16" viewBox="0 0 18 16"><path d="M0 3 H4.5 L6 0.5 H12 L13.5 3 H18 V16 H0z" fill="#5f7480"/><circle cx="9" cy="9.5" r="4" fill="#efefef"/><circle cx="9" cy="9.5" r="2.4" fill="#5f7480"/></svg>
<svg style="position:absolute;left:399px;top:308px" width="18" height="18" viewBox="0 0 18 18"><circle cx="7" cy="7" r="5.5" stroke="#5f7480" stroke-width="1.7" fill="none"/><path d="M11 11 L16.5 16.5" stroke="#5f7480" stroke-width="2.3"/><path d="M7 4.2 V9.8 M4.2 7 H9.8" stroke="#5f7480" stroke-width="1.4"/></svg>
<svg style="position:absolute;left:401px;top:350px" width="14" height="16" viewBox="0 0 14 16"><path d="M12.3 1.8 V14.2 L1.8 8z" stroke="#5f7480" stroke-width="1.6" fill="none" stroke-linejoin="round"/></svg>
<svg style="position:absolute;left:400px;top:392px" width="16" height="16" viewBox="0 0 16 16"><circle cx="8" cy="8" r="6.3" stroke="#5f7480" stroke-width="1.6" fill="none"/></svg>
<svg style="position:absolute;left:400px;top:433px" width="16" height="16" viewBox="0 0 16 16"><rect x="1.8" y="1.8" width="12.4" height="12.4" stroke="#5f7480" stroke-width="1.6" fill="none"/></svg>
<div style="position:absolute;left:400px;top:480.6px;width:4px;height:4px;border-radius:50%;background:#666"></div>
<div style="position:absolute;left:405.5px;top:480.6px;width:4px;height:4px;border-radius:50%;background:#666"></div>
<div style="position:absolute;left:411px;top:480.6px;width:4px;height:4px;border-radius:50%;background:#666"></div>
<div style="position:absolute;left:295px;top:655px;width:208px;height:29px;background:#c6eec6;border:1px solid #a8d8a8;border-radius:3px;box-shadow:0 1px 3px rgba(0,0,0,.18)"></div>
<svg style="position:absolute;left:391px;top:683px" width="14" height="7" viewBox="0 0 14 7"><path d="M0 0 H14 L7 6z" fill="#c6eec6"/></svg>
<div style="position:absolute;left:307px;top:661.00px;height:16px;line-height:16px;font-family:'Liberation Sans', sans-serif;font-size:10.95px;color:#1d2a1d;font-weight:400;white-space:pre;">Install successfully finished in 756 ms.</div>
</body></html>
